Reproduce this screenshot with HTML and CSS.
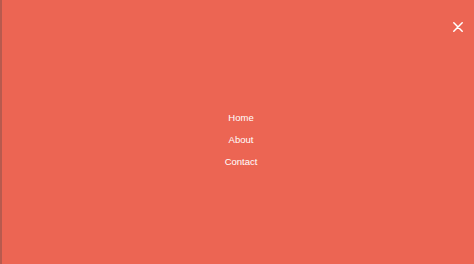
FILE: index.html
```html
<!DOCTYPE html>
<html>
<head>
<meta charset="utf-8">
<link rel="stylesheet" href="styles.css">
</head>
<body>
<div class="overlay">
  <button class="close" aria-label="Close">
    <svg width="10" height="10" viewBox="0 0 10 10"><path d="M0.8 0.8L9.2 9.2M9.2 0.8L0.8 9.2" stroke="#fff" stroke-width="1.5" stroke-linecap="round"/></svg>
  </button>
  <nav class="menu">
    <a href="#">Home</a>
    <a href="#">About</a>
    <a href="#">Contact</a>
  </nav>
</div>
</body>
</html>
```
FILE: styles.css
```css
html, body {
  margin: 0;
  padding: 0;
  width: 474px;
  height: 264px;
  overflow: hidden;
}
.overlay {
  box-sizing: border-box;
  width: 474px;
  height: 264px;
  background: #ec6553;
  border-left: 2px solid #b95a4e;
  display: flex;
  align-items: center;
  justify-content: center;
  padding: 16px 0 0 6px;
  position: relative;
  font-family: "Liberation Sans", Arial, sans-serif;
}
.menu {
  display: flex;
  flex-direction: column;
  align-items: center;
}
.menu a {
  color: #fff;
  text-decoration: none;
  font-size: 9.5px;
  line-height: 22px;
}
.close {
  position: absolute;
  top: 22px;
  right: 11px;
  width: 10px;
  height: 10px;
  padding: 0;
  border: 0;
  background: none;
  display: flex;
}
```
